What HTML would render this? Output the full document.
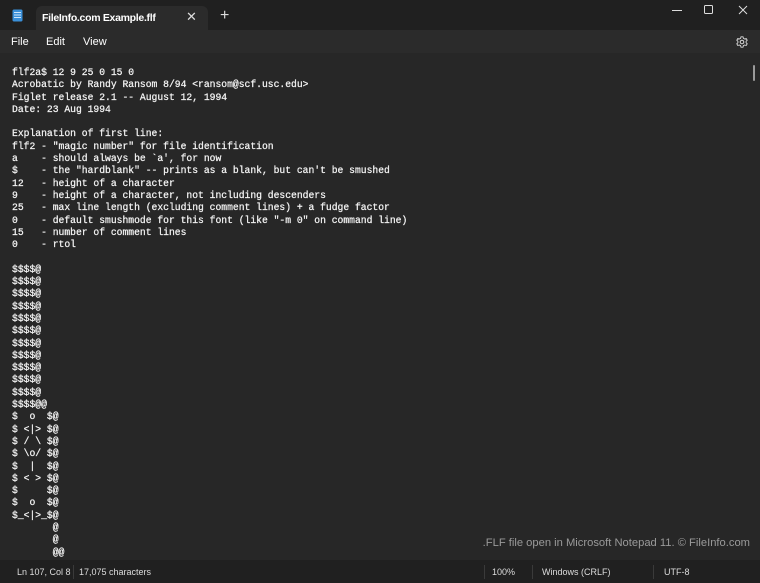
<!DOCTYPE html>
<html><head><meta charset="utf-8"><style>
*{margin:0;padding:0;box-sizing:border-box}
html,body{width:760px;height:583px;overflow:hidden;background:#272727}
body{font-family:"Liberation Sans",sans-serif;color:#fff;position:relative}
.title{position:absolute;left:0;top:0;width:760px;height:30px;background:#202020}
.tab{position:absolute;left:36px;top:6px;width:172px;height:24px;background:#2b2b2b;border-radius:6px 6px 0 0}
.tab span{position:absolute;left:6px;top:6px;font-size:10.5px;font-weight:bold;letter-spacing:-0.3px}
.tab .x{position:absolute;left:150px;top:3px;font-size:13px;font-weight:normal;color:#ddd}
.plus{position:absolute;left:220px;top:7px;font-size:16px;color:#ddd}
.menu{position:absolute;left:0;top:30px;width:760px;height:23px;background:#2b2b2b;font-size:11px}
.menu span{position:absolute;top:6px}
pre{position:absolute;left:12px;top:67px;font-family:"Liberation Mono",monospace;font-size:9.7px;line-height:12.29px;color:#f4f4f4;-webkit-text-stroke:0.25px #f4f4f4}
.status{position:absolute;left:0;top:560px;width:760px;height:23px;background:#202020;font-size:9px;color:#ddd}
.status span{position:absolute;top:7px}
.sep{position:absolute;top:5px;width:1px;height:14px;background:#3a3a3a}
.wm{position:absolute;right:10px;top:537px;font-size:11.2px;color:#9a9a9a}
.sb{position:absolute;left:753px;top:65px;width:2px;height:16px;background:#9a9a9a;border-radius:1px}
</style></head><body>
<div class="title">
<svg style="position:absolute;left:12px;top:9px" width="11" height="13"><rect x="0.5" y="0.5" width="10" height="12" rx="1.5" fill="#3a8fd8"/><rect x="2" y="3" width="7" height="1" fill="#cfe6fa"/><rect x="2" y="5.5" width="7" height="1" fill="#cfe6fa"/><rect x="2" y="8" width="7" height="1" fill="#cfe6fa"/></svg>
<div class="tab"><span>FileInfo.com Example.flf</span><span class="x">✕</span></div>
<div class="plus">+</div>
<svg style="position:absolute;left:672px;top:10px" width="10" height="2"><rect width="10" height="1" fill="#ddd"/></svg>
<svg style="position:absolute;left:704px;top:5px" width="10" height="10"><rect x="0.5" y="0.5" width="8" height="8" fill="none" stroke="#ddd" rx="1"/></svg>
<svg style="position:absolute;left:738px;top:5px" width="10" height="10"><path d="M1 1L9 9M9 1L1 9" stroke="#ddd" stroke-width="1"/></svg>
</div>
<div class="menu"><span style="left:11px">File</span><span style="left:46px">Edit</span><span style="left:83px">View</span>
<svg style="position:absolute;left:736px;top:6px" width="12" height="12" viewBox="0 0 12 12"><circle cx="6" cy="6" r="1.8" fill="none" stroke="#ddd"/><path d="M5 0.8h2l.4 1.5 1.3.7 1.5-.5 1 1.7-1.1 1.1v1.4l1.1 1.1-1 1.7-1.5-.5-1.3.7L7 11.2H5l-.4-1.5-1.3-.7-1.5.5-1-1.7 1.1-1.1V5.3L.8 4.2l1-1.7 1.5.5 1.3-.7z" fill="none" stroke="#ddd" stroke-width="0.9"/></svg></div>
<div class="sb"></div>
<pre>flf2a$ 12 9 25 0 15 0
Acrobatic by Randy Ransom 8/94 &lt;ransom@scf.usc.edu&gt;
Figlet release 2.1 -- August 12, 1994
Date: 23 Aug 1994

Explanation of first line:
flf2 - "magic number" for file identification
a    - should always be `a', for now
$    - the "hardblank" -- prints as a blank, but can't be smushed
12   - height of a character
9    - height of a character, not including descenders
25   - max line length (excluding comment lines) + a fudge factor
0    - default smushmode for this font (like "-m 0" on command line)
15   - number of comment lines
0    - rtol

$$$$@
$$$$@
$$$$@
$$$$@
$$$$@
$$$$@
$$$$@
$$$$@
$$$$@
$$$$@
$$$$@
$$$$@@
$  o  $@
$ &lt;|&gt; $@
$ / \ $@
$ \o/ $@
$  |  $@
$ &lt; &gt; $@
$     $@
$  o  $@
$_&lt;|&gt;_$@
       @
       @
       @@</pre>
<div class="wm">.FLF file open in Microsoft Notepad 11. © FileInfo.com</div>
<div class="status">
<span style="left:17px">Ln 107, Col 8</span><div class="sep" style="left:73px"></div>
<span style="left:79px">17,075 characters</span>
<div class="sep" style="left:484px"></div><span style="left:492px">100%</span>
<div class="sep" style="left:532px"></div><span style="left:542px">Windows (CRLF)</span>
<div class="sep" style="left:653px"></div><span style="left:664px">UTF-8</span>
</div>
</body></html>
